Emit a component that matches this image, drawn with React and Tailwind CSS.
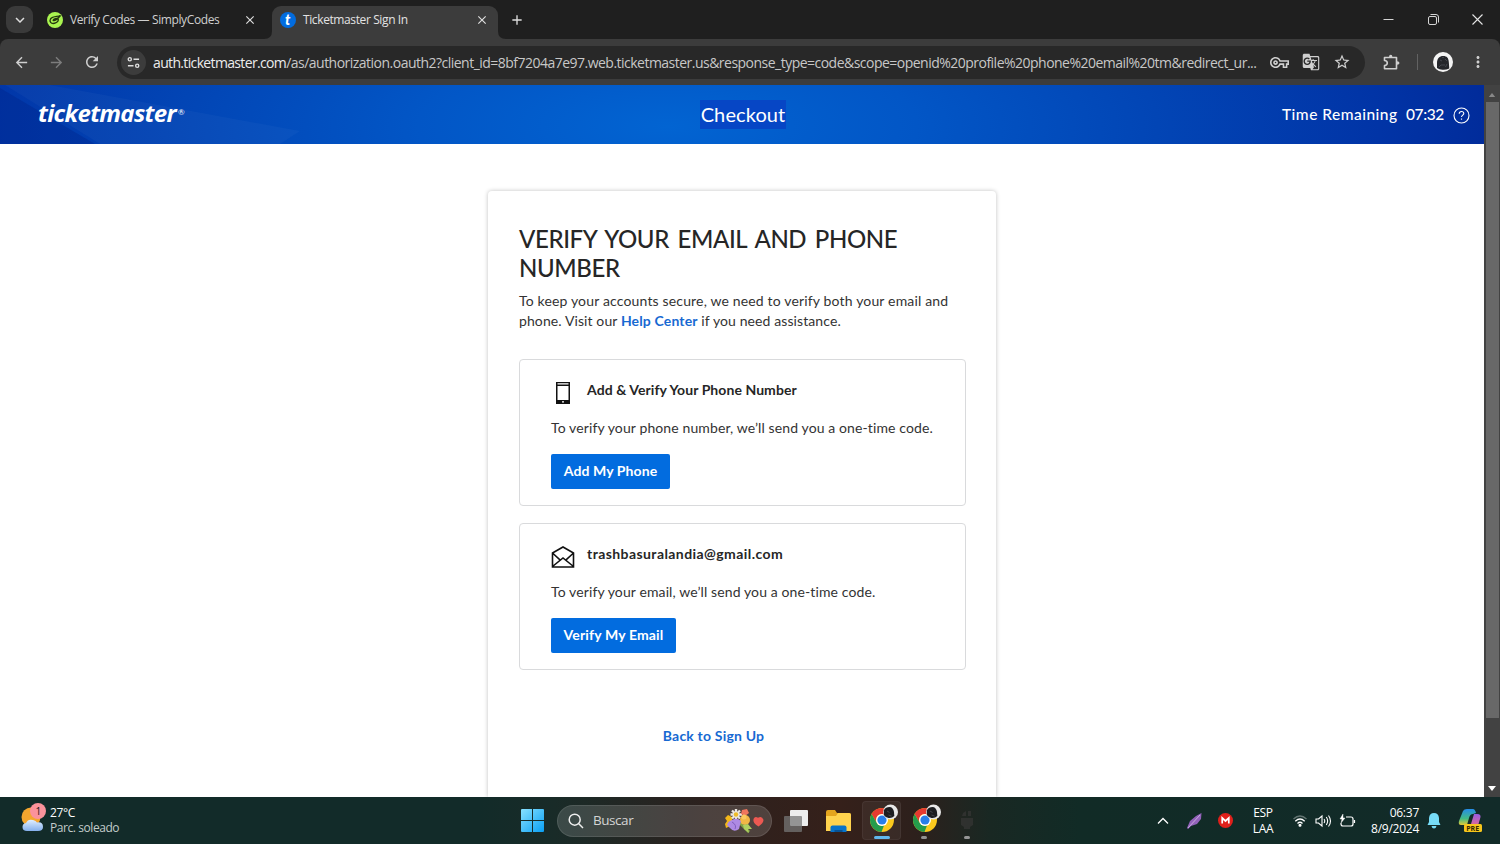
import React from "react";
import { MdOutlineVpnKey, MdGTranslate, MdStarBorder, MdArrowBack, MdArrowForward, MdRefresh, MdMoreVert, MdKeyboardArrowDown, MdClose, MdAdd } from "react-icons/md";

const UI = "font-['Open_Sans','Noto_Sans',sans-serif]";
const BRAND = "font-[Lato,'Open_Sans',sans-serif]";

function Avatar({ className }) {
  return (
    <svg viewBox="0 0 20 20" className={className}>
      <circle cx="10" cy="10" r="10" fill="#f4f4f4" />
      <path d="M4 16V11C4 6.500 6.500 4 10.200 4S15.500 6 15.800 10L16.300 16.500Q13 18 10 17.800Q6.500 18 4 16Z" fill="#24262b" />
      <path d="M7 8l2 1M12 7l2 2M8 13h4M6 15l2-2M12.500 15l1.500-3M9 5.500h2" stroke="#4b4f57" strokeWidth=".8" />
    </svg>
  );
}

function TabBar() {
  return (
    <div className="flex h-[39px] w-full shrink-0 bg-[#1f1f1f] text-[#dedede]">
      <div className="ml-[6px] mt-[6px] flex h-[27px] w-[27px] items-center justify-center rounded-[9px] bg-[#3a3a3a]">
        <MdKeyboardArrowDown className="h-[18px] w-[18px]" />
      </div>
      <div className="ml-[14px] flex h-[39px] w-[217px] items-center">
        <svg viewBox="0 0 16 16" className="h-4 w-4 shrink-0">
          <circle cx="8" cy="8" r="8" fill="#a9f450" />
          <path d="M13.500 3.500C11 5 6 3.500 3.500 7C2 9.500 4 12 7.500 11.300C10.500 10.700 12 8.500 11 6.700C9.500 6 6.800 6.500 6.200 8.300C7.500 9.500 10.500 7 13.500 3.500Z" fill="none" stroke="#25360f" strokeWidth="1.400" />
        </svg>
        <span className="ml-[7px] w-[150px] whitespace-nowrap pt-px text-[12px] tracking-[-0.390px] text-[#cfcfcf]">Verify Codes — SimplyCodes</span>
        <MdClose className="ml-[23px] h-3.5 w-3.5" />
      </div>
      <div className="flex h-[39px] w-[8px] items-end">
        <svg viewBox="0 0 8 8" className="h-2 w-2"><path d="M8 0V8H0Q8 8 8 0Z" fill="#3c3c3c" /></svg>
      </div>
      <div className="mt-[6px] flex h-[33px] w-[226px] items-center rounded-t-[9px] bg-[#3c3c3c] pb-[5px] pl-[8px]">
        <svg viewBox="0 0 16 16" className="h-4 w-4 shrink-0">
          <circle cx="8" cy="8" r="8" fill="#026cdf" />
          <text x="5" y="12.700" fontSize="14.500" fontWeight="900" fontStyle="italic" fontFamily="Lato" fill="white">t</text>
        </svg>
        <span className="ml-[7px] w-[106px] whitespace-nowrap text-[12px] tracking-[-0.390px] text-[#e3e3e3]">Ticketmaster Sign In</span>
        <MdClose className="ml-[66px] h-3.5 w-3.5" />
      </div>
      <div className="flex h-[39px] w-[8px] items-end">
        <svg viewBox="0 0 8 8" className="h-2 w-2"><path d="M0 0V8H8Q0 8 0 0Z" fill="#3c3c3c" /></svg>
      </div>
      <MdAdd className="ml-[3px] mt-[12px] h-4 w-4" />
      <div className="ml-auto mr-[17px] flex h-[39px] items-center gap-[33.500px]">
        <svg viewBox="0 0 11 11" className="h-[11px] w-[11px]"><path d="M0.500 5.500H10.500" stroke="#d5d5d5" /></svg>
        <svg viewBox="0 0 11 11" className="h-[11px] w-[11px]" fill="none" stroke="#d5d5d5"><rect x=".5" y="2.500" width="8" height="8" rx="1.500" /><path d="M2.500 .5H8Q10.500 .5 10.500 3V8.500" /></svg>
        <svg viewBox="0 0 11 11" className="h-[11px] w-[11px]"><path d="M.5 .5L10.500 10.500M10.500 .5L.5 10.500" stroke="#e5e5e5" strokeWidth="1.100" /></svg>
      </div>
    </div>
  );
}

function Toolbar() {
  return (
    <div className="h-[46px] w-full shrink-0 bg-[#1f1f1f]">
      <div className="flex h-[46px] items-center rounded-t-[8px] bg-[#3c3c3c] text-[#cfcfcf]">
        <MdArrowBack className="ml-[13px] h-[17px] w-[17px]" />
        <MdArrowForward className="ml-[18px] h-[17px] w-[17px] text-[#7d7d7d]" />
        <MdRefresh className="ml-[18px] h-[18px] w-[18px]" />
        <div className="ml-[16px] flex h-[33px] w-[1248px] items-center rounded-full bg-[#282828] pl-[4px]">
          <div className="flex h-[25px] w-[25px] items-center justify-center rounded-full bg-[#3c3c3c]">
            <svg viewBox="0 0 14 14" className="h-[13px] w-[13px]" fill="none" stroke="#dedede" strokeWidth="1.500"><circle cx="3" cy="3.500" r="1.700" /><path d="M7 3.500H13M1 10.500H7" /><circle cx="11" cy="10.500" r="1.700" /></svg>
          </div>
          <span className={`ml-[7px] w-[1106px] whitespace-nowrap text-[14px] tracking-[-0.518px] text-[#c7c7c7] ${UI}`}><span className="tracking-[-0.650px] text-[#ececec]">auth.ticketmaster.com</span>/as/authorization.oauth2?client_id=8bf7204a7e97.web.ticketmaster.us&amp;response_type=code&amp;scope=openid%20profile%20phone%20email%20tm&amp;redirect_ur...</span>
          <MdOutlineVpnKey className="ml-[11px] h-[19px] w-[19px] shrink-0" />
          <MdGTranslate className="ml-[13px] h-[18px] w-[18px] shrink-0" />
          <MdStarBorder className="ml-[13px] h-[18px] w-[18px] shrink-0" />
        </div>
        <svg viewBox="0 0 19 19" className="ml-[17px] h-[19px] w-[19px]" fill="none" stroke="#cfcfcf" strokeWidth="1.600"><path d="M2.500 4.500H14.500V15.800H2.500V12.500Q5.300 12.300 5.300 10T2.500 7.500Z" strokeLinejoin="round" /><path d="M7 4Q7 1.700 8.700 1.700T10.400 4ZM15 8.200Q17.500 8.200 17.500 10T15 11.800Z" fill="#cfcfcf" stroke="none" /></svg>
        <div className="ml-[16px] h-4 w-px bg-[#626262]" />
        <Avatar className="ml-[15px] h-5 w-5" />
        <MdMoreVert className="ml-[16px] h-[18px] w-[18px]" />
      </div>
    </div>
  );
}

function SiteHeader() {
  return (
    <div className="relative h-[59px] w-full shrink-0 overflow-hidden bg-[radial-gradient(ellipse_60%_480%_at_45%_70%,#0264d2_0%,#0256c6_28%,#0245b5_55%,#0134a6_80%,#012693_100%)] text-white">
      <svg className="absolute left-0 top-0 h-[59px] w-[400px]" viewBox="0 0 400 59"><path d="M5 0H50L300 46L280 59H100Z" fill="white" opacity=".03" /><path d="M0 3L95 59H0Z" fill="#001f80" opacity=".3" /></svg>
      <div className={`relative grid h-[59px] grid-cols-[700px_86px_1fr] ${BRAND}`}>
        <div className="flex pl-[38px] pt-[14px]">
          <span className="w-[140px] whitespace-nowrap font-['Open_Sans',sans-serif] text-[24px] font-bold italic leading-[28px] tracking-[-0.680px]">ticketmaster</span>
          <span className="pt-[8px] text-[8px] leading-[11px]">®</span>
        </div>
        <div className="mt-[15px] h-[29px] whitespace-nowrap bg-[#0646c5] text-center text-[20px] leading-[28px] tracking-[0.100px]">Checkout</div>
        <div className="flex items-center justify-end pt-px pr-[14px] text-[15.500px] font-medium">
          <span className="w-[116px] whitespace-nowrap tracking-[0.480px]">Time Remaining</span>
          <span className="ml-[8px] w-[38px] whitespace-nowrap tracking-[-0.400px]">07:32</span>
          <svg viewBox="0 0 17 17" className="ml-[9px] h-[17px] w-[17px]" fill="none" stroke="white"><circle cx="8.500" cy="8.500" r="7.500" strokeWidth="1.100" /><path d="M6.200 6.700Q6.300 4.500 8.500 4.500T10.800 6.500C10.800 8 8.500 8.200 8.500 10" strokeWidth="1.100" /><path d="M8.500 11.500V12.700" strokeWidth="1.200" /></svg>
        </div>
      </div>
    </div>
  );
}

function VerifyBox({ icon, title, titleClass, body, bodyClass, action, actionClass }) {
  return (
    <div className="h-[147px] w-[447px] rounded-[4px] border border-[#d9dadc] pl-[31px]">
      <div className="mt-[17px] flex h-[27px]">
        <div className="flex w-[23px] items-end justify-center">{icon}</div>
        <div className={`ml-[13px] whitespace-nowrap text-[14px] font-bold leading-[25px] ${titleClass}`}>{title}</div>
      </div>
      <div className={`mt-[13px] whitespace-nowrap text-[14px] leading-[22px] text-[#333] ${bodyClass}`}>{body}</div>
      <button className={`mt-[15px] block h-[35px] whitespace-nowrap rounded-[2px] bg-[#026cdf] pb-[2px] text-[14px] font-bold leading-[33px] text-white ${actionClass}`}>{action}</button>
    </div>
  );
}

const phoneIcon = (
  <svg viewBox="0 0 14 22" className="h-[22px] w-[14px]"><path fillRule="evenodd" d="M0 0H14V22H0ZM1.500 1.200V2.500H12.500V1.200ZM1.500 4V18H12.500V4ZM6 19.300V20.600H8V19.300Z" fill="#111" /></svg>
);
const mailIcon = (
  <svg viewBox="0 0 24 22" className="h-[22px] w-[24px] shrink-0" fill="none" stroke="#111" strokeWidth="1.600"><path d="M1.500 7L12 1L22.500 7V21H1.500ZM1.500 7L9.500 14.300M22.500 7L14.500 14.300M1.500 20.500L12 12L22.500 20.500" /></svg>
);

function Page() {
  return (
    <div className="flex min-h-0 flex-1">
      <div className="flex w-[1484px] flex-col bg-white">
        <SiteHeader />
        <div className={`mx-auto mt-[47px] min-h-0 w-[508px] flex-1 rounded-t-[4px] px-[31px] pt-[34px] text-[#262626] shadow-[0_0_4px_rgba(0,0,0,0.25)] ${BRAND}`}>
          <h1 className="-mt-px whitespace-nowrap text-[24px] font-medium leading-[29px] tracking-[-0.400px] [word-spacing:3px]">VERIFY YOUR EMAIL AND PHONE<br />NUMBER</h1>
          <p className="mt-[9px] whitespace-nowrap text-[14px] leading-[20px] text-[#333]"><span className="tracking-[0.160px]">To keep your accounts secure, we need to verify both your email and</span><br /><span className="tracking-[0.100px]">phone. Visit our <b className="tracking-[0.150px] text-[#1769d2]">Help Center</b> if you need assistance.</span></p>
          <div className="mt-[28px] flex flex-col gap-[17px]">
            <VerifyBox icon={phoneIcon} title="Add & Verify Your Phone Number" titleClass="tracking-[0.070px]" body="To verify your phone number, we’ll send you a one-time code." bodyClass="tracking-[0.110px]" action="Add My Phone" actionClass="w-[119px] tracking-[0.100px]" />
            <VerifyBox icon={mailIcon} title="trashbasuralandia@gmail.com" titleClass="tracking-[0.420px]" body="To verify your email, we’ll send you a one-time code." bodyClass="tracking-[0.110px]" action="Verify My Email" actionClass="w-[125px] tracking-[0.150px]" />
          </div>
          <div className="mt-[55px] pr-[57px] text-center text-[14px] font-bold leading-[22px] tracking-[0.200px] text-[#1769d2]">Back to Sign Up</div>
        </div>
      </div>
      <div className="flex w-4 flex-col items-center bg-[#424242]">
        <svg viewBox="0 0 8 5" className="mt-[8px] h-[4px] w-[8px]"><path d="M0 5L4 0L8 5Z" fill="#888" /></svg>
        <div className="mt-[5px] h-[616px] w-[13px] bg-[#686868]" />
        <svg viewBox="0 0 8 5" className="mb-[6px] mt-auto h-[5px] w-[8px]"><path d="M0 0L4 5L8 0Z" fill="#fff" /></svg>
      </div>
    </div>
  );
}

function Chrome() {
  return (
    <svg viewBox="0 0 29 29" className="h-[29px] w-[29px]">
      <circle cx="13" cy="16" r="12" fill="#fbc91d" />
      <path d="M2.600 10A12 12 0 0 1 23.400 10H13A6 6 0 0 0 7.800 19Z" fill="#e53a31" />
      <path d="M2.600 10L7.800 19A6 6 0 0 0 15 21.600L12.500 28A12 12 0 0 1 2.600 10Z" fill="#249c4c" />
      <circle cx="13" cy="16" r="6" fill="white" /><circle cx="13" cy="16" r="4.600" fill="#287eea" />
      <circle cx="21.500" cy="8" r="7.500" fill="#e8e8e8" />
      <path d="M14.800 11V6.500C16 3.500 18 3 20.500 3S24.500 5 25 8L25.300 12Q23 14.500 19.500 14Q16.500 13.500 14.800 11Z" fill="#1c1d21" />
      <path d="M18 7L20.500 8.500M19.500 11l3 1" stroke="#45474c" fill="none" />
    </svg>
  );
}

function Taskbar() {
  return (
    <div className="flex h-[47px] w-full shrink-0 items-center bg-[linear-gradient(90deg,#122b29_0%,#122b29_32%,#192b28_37%,#2d211e_47%,#35201a_56%,#2d201c_61%,#192823_66%,#112b26_72%,#122b29_100%)] text-white">
      <div className="ml-[21px] flex h-[47px] w-[120px]">
        <svg viewBox="0 0 26 30" className="mt-[5px] h-[30px] w-[26px]">
          <defs><linearGradient id="cloud" x2="0" y2="1"><stop stopColor="#e2efff" /><stop offset="1" stopColor="#84b0ed" /></linearGradient></defs>
          <circle cx="10" cy="15" r="9.500" fill="#f4a62e" /><path d="M6 29Q1.500 29 1.500 25Q1.500 21.500 5 21Q7 16.500 12 18Q15 18.500 16 20.500Q22 19.500 22 25Q22 29 17 29Z" fill="url(#cloud)" />
          <circle cx="17" cy="9" r="8" fill="#fb929b" /><text x="14.500" y="12.500" fontSize="10" fontFamily="Open Sans" fill="#171717">1</text>
        </svg>
        <div className="ml-[3px] whitespace-nowrap pt-[8px] text-[12px] leading-[15px]"><div className="tracking-[-0.350px]">27°C</div><div className="tracking-[-0.430px] text-[#c2cccb]">Parc. soleado</div></div>
      </div>
      <svg viewBox="0 0 23 23" className="ml-[380px] h-[23px] w-[23px]">
        <defs><linearGradient id="win" x2="1" y2="1"><stop stopColor="#88e1ff" /><stop offset="1" stopColor="#099ff3" /></linearGradient></defs>
        <path d="M0 1Q0 0 1 0H11V11H0ZM12 0H22Q23 0 23 1V11H12ZM0 12H11V23H1Q0 23 0 22ZM12 12H23V22Q23 23 22 23H12Z" fill="url(#win)" />
      </svg>
      <div className="ml-[13px] flex h-[32px] w-[215px] items-center rounded-full border border-white/10 bg-white/15">
        <svg viewBox="0 0 16 16" className="ml-[10px] h-4 w-4" fill="none" stroke="#eee" strokeWidth="1.500"><circle cx="6.700" cy="6.700" r="5.500" /><path d="M10.800 10.800L15 15" /></svg>
        <span className="ml-[9px] w-[40px] text-[13.500px] tracking-[-0.450px] text-[#d4d4d4]">Buscar</span>
        <svg viewBox="0 0 40 26" className="ml-[91px] h-[26px] w-[40px]">
          <path d="M16 15L25 24" stroke="#80a346" strokeWidth="3" />
          <path d="M4 7L8 9L8 17L2 20L1 16L3 13L1 10Z" fill="#f3b719" />
          <g stroke="#eee7df" strokeWidth="2.400"><path d="M12 1V12M6.500 6.500H18M8 2.500L16 10.500M16 2.500L8 10.500" /></g><circle cx="12" cy="6.500" r="2.200" fill="#eebb28" />
          <path d="M18 2L23 1L25 5L21 8L17 6Z" fill="#ef755d" /><circle cx="21" cy="12" r="5" fill="#f1b646" /><circle cx="20" cy="9" r="2.500" fill="#fac95e" />
          <path d="M8 12Q13 9 17 13L15 21Q10 25 6 20L3 17Q4 13 8 12Z" fill="#ae8ae3" /><path d="M8 14Q13 17 11 21" stroke="#815dbe" fill="none" />
          <path d="M19 17L24 16L28 21L24 21L25 25L20 21Z" fill="#afcf61" />
          <path d="M29.500 11Q31 7.500 34 9.800Q38 7.500 39.500 12Q39.500 15 34.500 18.500Q28.500 15 29.500 11Z" fill="#ec5952" />
        </svg>
      </div>
      <svg viewBox="0 0 24 22" className="ml-[12px] h-[22px] w-[24px]"><rect x="6" width="18" height="16" rx="1" fill="#ededed" /><rect y="6" width="18" height="16" rx="1" fill="#757575" opacity=".75" /></svg>
      <svg viewBox="0 0 25 22" className="ml-[18px] h-[22px] w-[25px]"><path d="M0 2Q0 0 2 0H9L11 3H23Q25 3 25 5V21H0Z" fill="#e4a51e" /><path d="M0 6H10L12 3H23Q25 3 25 5V21H0Z" fill="#ffd34e" /><path d="M4.500 22V17.500Q4.500 15.500 6.500 15.500H18.500Q20.500 15.500 20.500 17.500V22Z" fill="#0873c9" /><path d="M8.500 22V20H16.500V22Z" fill="#075395" /></svg>
      <div className="ml-[11px] flex h-[39px] w-[39px] flex-col items-center rounded-[4px] border border-white/5 bg-white/5">
        <div className="ml-[3px] mt-[2px]"><Chrome /></div>
        <div className="mt-[3px] h-[3px] w-[16px] rounded-full bg-[#61b8ec]" />
      </div>
      <div className="ml-[11px] flex h-[39px] w-[29px] flex-col items-center"><div className="mt-[3px]"><Chrome /></div><div className="mr-[5px] mt-[3px] h-[3px] w-[6px] rounded-full bg-[#929292]" /></div>
      <div className="ml-[19px] flex h-[39px] w-[14px] flex-col items-center"><svg viewBox="0 0 14 18" className="mt-[10px] h-[18px] w-[14px] opacity-60"><path d="M3 2L6 0V5H2ZM8 0H11V5H8ZM1 7H13V14L10 16V18H4V16L1 14Z" fill="#3b3939" /></svg><div className="mt-[7px] h-[3px] w-[6px] rounded-full bg-[#969696]" /></div>
      <div className="ml-auto flex h-[47px] items-center">
        <svg viewBox="0 0 12 8" className="h-[8px] w-[12px]"><path d="M1 6.500L6 1.500L11 6.500" fill="none" stroke="white" strokeWidth="1.300" /></svg>
        <svg viewBox="0 0 15 16" className="ml-[18px] h-4 w-[15px]"><path d="M14.500 0L14 6L10 11L4 13L1 16L0 15L3 8L9 3Z" fill="#9262ba" /><path d="M1 15L13 2" stroke="#e0c7ef" strokeWidth=".7" /></svg>
        <svg viewBox="0 0 15 15" className="ml-[16px] h-[15px] w-[15px]"><circle cx="7.500" cy="7.500" r="7.500" fill="#df201b" /><path d="M4.200 10.500V5L7.500 8L10.800 5V10.500" fill="none" stroke="white" strokeWidth="1.700" /></svg>
        <div className="ml-[18px] w-[24px] whitespace-nowrap text-center text-[12px] leading-[16px] tracking-[-0.300px]"><div>ESP</div><div>LAA</div></div>
        <svg viewBox="0 0 14 12" className="ml-[18px] h-[12px] w-[14px]" fill="none" stroke="white" strokeWidth="1.300"><path d="M.5 4Q7 -2 13.500 4" opacity=".35" /><path d="M2.300 6.200Q7 1.800 11.700 6.200M4.500 8.500Q7 6 9.500 8.500" /><circle cx="7" cy="10.200" r=".9" fill="white" /></svg>
        <svg viewBox="0 0 17 14" className="ml-[8px] h-[14px] w-[17px]" fill="none" stroke="white" strokeWidth="1.100"><path d="M1 5H3.500L7 2V12L3.500 9H1ZM9 5Q10.500 7 9 9M11.300 3Q14 7 11.300 11M13.500 1.500Q17.500 7 13.500 12.500" /></svg>
        <svg viewBox="0 0 17 14" className="ml-[7px] h-[14px] w-[17px]" fill="none" stroke="white" strokeWidth="1.200"><path d="M7 3H12Q14 3 14 5V10Q14 12 12 12H4Q2 12 2 10V9M15.500 6V9" /><path d="M4 0L1 5H3L2 9L6 4H4Z" fill="white" strokeWidth=".4" /></svg>
        <div className="ml-[15px] w-[48px] whitespace-nowrap text-right text-[12px] leading-[16px] tracking-[-0.250px]"><div>06:37</div><div>8/9/2024</div></div>
        <svg viewBox="0 0 14 16" className="ml-[8px] h-[16px] w-[14px]"><path d="M7 0Q11.500 0 12 5V9L13.500 12H.5L2 9V5Q2.500 0 7 0Z" fill="#76dcf7" /><path d="M4.500 13H9.500Q9 15.500 7 15.500T4.500 13Z" fill="#76dcf7" /></svg>
        <svg viewBox="0 0 24 23" className="ml-[17px] mr-[18px] h-[23px] w-[24px]">
          <defs><linearGradient id="pilotA" x2="0" y2="1"><stop stopColor="#258ce9" /><stop offset=".6" stopColor="#42bb86" /><stop offset="1" stopColor="#e3ca35" /></linearGradient><linearGradient id="pilotB" x2="0" y2="1"><stop stopColor="#995ce2" /><stop offset="1" stopColor="#f06e7c" /></linearGradient></defs>
          <path d="M5 2Q6 0 9 0H15Q17 0 18 4L15 5Q12 5 11 9L9 16H3Q0 16 1 12Z" fill="url(#pilotA)" /><path d="M16 5H19Q24 5 22 10L19 20H9Q12 19 13 15Z" fill="url(#pilotB)" />
          <rect x="6" y="15" width="18" height="8" rx="1.500" fill="#f7c61c" /><text x="8.200" y="21.800" fontSize="7" fontWeight="700" fontFamily="Open Sans" fill="#332900">PRE</text>
        </svg>
      </div>
    </div>
  );
}

export default function App() {
  return (
    <div className={`flex h-[844px] w-[1500px] flex-col overflow-hidden ${UI}`}>
      <TabBar />
      <Toolbar />
      <Page />
      <Taskbar />
    </div>
  );
}
